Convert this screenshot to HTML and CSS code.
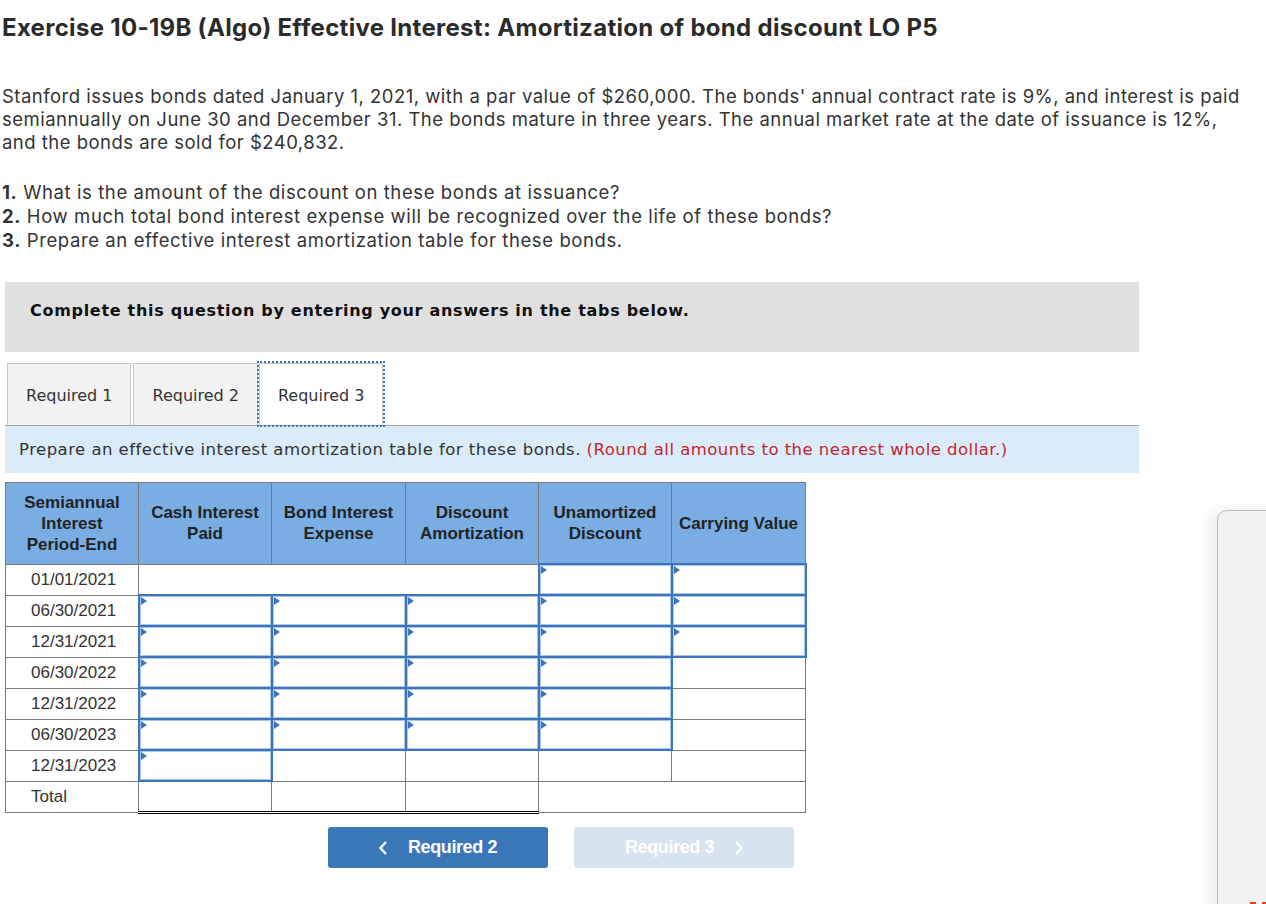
FILE: index.html
```html
<!DOCTYPE html>
<html lang="en">
<head>
<meta charset="utf-8">
<title>Exercise 10-19B (Algo)</title>
<link rel="stylesheet" href="styles.css">
</head>
<body>
<div class="page">
  <h1 class="title">Exercise 10-19B (Algo) Effective Interest: Amortization of bond discount LO P5</h1>
  <p class="intro">Stanford issues bonds dated January 1, 2021, with a par value of $260,000. The bonds' annual contract rate is 9%, and interest is paid<br>semiannually on June 30 and December 31. The bonds mature in three years. The annual market rate at the date of issuance is 12%,<br>and the bonds are sold for $240,832.</p>
  <div class="questions">
    <div><b>1.</b> What is the amount of the discount on these bonds at issuance?</div>
    <div><b>2.</b> How much total bond interest expense will be recognized over the life of these bonds?</div>
    <div><b>3.</b> Prepare an effective interest amortization table for these bonds.</div>
  </div>

  <section class="question">
    <div class="prompt">Complete this question by entering your answers in the tabs below.</div>
    <div class="tabs">
      <div class="tab">Required 1</div>
      <div class="tab">Required 2</div>
      <div class="tab active">Required 3</div>
    </div>
    <div class="instruction">Prepare an effective interest amortization table for these bonds. <span class="red">(Round all amounts to the nearest whole dollar.)</span></div>

    <table class="amort">
      <colgroup>
        <col class="c1"><col class="c2"><col class="c3"><col class="c4"><col class="c5"><col class="c6">
      </colgroup>
      <thead>
        <tr>
          <th>Semiannual<br>Interest<br>Period-End</th>
          <th>Cash Interest<br>Paid</th>
          <th>Bond Interest<br>Expense</th>
          <th>Discount<br>Amortization</th>
          <th>Unamortized<br>Discount</th>
          <th>Carrying Value</th>
        </tr>
      </thead>
      <tbody>
        <tr><td class="date">01/01/2021</td><td colspan="3"></td><td class="in"></td><td class="in"></td></tr>
        <tr><td class="date">06/30/2021</td><td class="in"></td><td class="in"></td><td class="in"></td><td class="in"></td><td class="in"></td></tr>
        <tr><td class="date">12/31/2021</td><td class="in"></td><td class="in"></td><td class="in"></td><td class="in"></td><td class="in"></td></tr>
        <tr><td class="date">06/30/2022</td><td class="in"></td><td class="in"></td><td class="in"></td><td class="in"></td><td></td></tr>
        <tr><td class="date">12/31/2022</td><td class="in"></td><td class="in"></td><td class="in"></td><td class="in"></td><td></td></tr>
        <tr><td class="date">06/30/2023</td><td class="in"></td><td class="in"></td><td class="in"></td><td class="in"></td><td></td></tr>
        <tr><td class="date">12/31/2023</td><td class="in"></td><td></td><td></td><td></td><td></td></tr>
        <tr class="total"><td class="date">Total</td><td class="sum"></td><td class="sum"></td><td class="sum"></td><td colspan="2"></td></tr>
      </tbody>
    </table>

    <div class="nav">
      <button class="btn prev"><svg class="chev" viewBox="0 0 8 14" width="8" height="14"><path d="M7 1 L1.5 7 L7 13" fill="none" stroke="currentColor" stroke-width="2.4"/></svg><span>Required 2</span></button>
      <button class="btn next"><span>Required 3</span><svg class="chev" viewBox="0 0 8 14" width="8" height="14"><path d="M1 1 L6.5 7 L1 13" fill="none" stroke="currentColor" stroke-width="2.4"/></svg></button>
    </div>
  </section>
</div>
<aside class="side"><div class="side-mark"></div></aside>
</body>
</html>
```
FILE: styles.css
```css
html, body {
  margin: 0;
  overflow: hidden;
}
body {
  font-family: Inter, "Open Sans", sans-serif;
  color: #333;
  background: #fff;
}
.page {
  padding-left: 2px;
}
.title {
  margin: 13px 0 0;
  font-size: 24px;
  line-height: 29px;
  font-weight: 700;
  letter-spacing: 0.3px;
  color: #2b2b2b;
  white-space: nowrap;
}
.intro {
  margin: 43px 0 0;
  font-size: 18.5px;
  line-height: 23px;
  letter-spacing: 0.48px;
  white-space: nowrap;
}
.questions {
  margin-top: 26px;
  font-size: 18.5px;
  line-height: 24px;
  letter-spacing: 0.6px;
}
.questions b {
  font-weight: 700;
}
.question {
  margin: 30px 0 0 3px;
  width: 1134px;
}
.prompt {
  background: #e0e0e0;
  height: 70px;
  box-sizing: border-box;
  padding: 19px 0 0 25px;
  font-family: "DejaVu Sans", Verdana, sans-serif;
  font-weight: bold;
  font-size: 16px;
  letter-spacing: 0.7px;
  line-height: 20px;
  color: #111;
}
.tabs {
  display: flex;
  margin-top: 11px;
  padding-left: 2px;
  border-bottom: 1px solid #a3a3a3;
}
.tab {
  height: 62px;
  box-sizing: border-box;
  padding: 2px 18px 0 18px;
  border: 1px solid #c6c6c6;
  border-bottom: none;
  background: #f2f2f2;
  display: flex;
  align-items: center;
  font-family: "DejaVu Sans", Verdana, sans-serif;
  font-size: 16px;
  line-height: 20px;
  color: #333;
  margin-right: 2px;
}
.tab.active {
  background: #fff;
  outline: 2px dotted #3a77c2;
  margin-left: -1px;
}
.instruction {
  background: #daebf9;
  height: 47px;
  box-sizing: border-box;
  padding: 14px 0 0 14px;
  font-family: "DejaVu Sans", Verdana, sans-serif;
  font-size: 16.5px;
  letter-spacing: 0.47px;
  line-height: 20px;
  color: #333;
}
.red {
  color: #c3262e;
}
.amort {
  margin-top: 9px;
  border-collapse: collapse;
  table-layout: fixed;
  width: 801px;
  font-family: "Liberation Sans", Arial, sans-serif;
  font-size: 17px;
  color: #333;
}
.c1, .c2, .c4, .c5 { width: 133px; }
.c3, .c6 { width: 134px; }
.amort th {
  background: #79ade4;
  border: 1px solid #7a7a7a;
  height: 80px;
  padding: 0;
  font-weight: bold;
  line-height: 21px;
  color: #222;
}
.amort td {
  border: 1px solid #7a7a7a;
  height: 29px;
  padding: 0;
}
.amort td.date {
  padding-left: 25px;
  text-align: left;
}
.amort td.in {
  border: 2px solid #3d75ba;
  position: relative;
  box-shadow: inset 0 0 0 1px #a9c7ec;
}
.amort td.in::before {
  content: "";
  position: absolute;
  top: 1px;
  left: 1px;
  border-left: 6px solid #3d75ba;
  border-top: 4px solid transparent;
  border-bottom: 4px solid transparent;
}
.amort td.sum {
  border-top: 1px solid #000;
  border-bottom: 3px double #000;
}
.nav {
  display: flex;
  gap: 26px;
  margin: 13px 0 0 323px;
}
.btn {
  width: 220px;
  height: 41px;
  border: none;
  border-radius: 3px;
  display: flex;
  align-items: center;
  justify-content: center;
  gap: 21px;
  font-family: "Liberation Sans", Arial, sans-serif;
  font-weight: bold;
  font-size: 18px;
  letter-spacing: -0.4px;
  color: #fff;
  padding: 0;
}
.prev {
  background: #3a77b9;
}
.next {
  background: #d6e3f1;
}
.chev {
  display: block;
}
.side {
  position: absolute;
  left: 1217px;
  top: 510px;
  width: 60px;
  height: 400px;
  background: #f2f2f2;
  border: 1px solid #b8b8b8;
  border-radius: 10px 0 0 0;
  box-shadow: -8px 0 14px rgba(0, 0, 0, 0.07);
}
.side-mark {
  position: absolute;
  left: 32px;
  top: 391px;
  width: 18px;
  border-top: 3px dashed #e0461c;
}
```
